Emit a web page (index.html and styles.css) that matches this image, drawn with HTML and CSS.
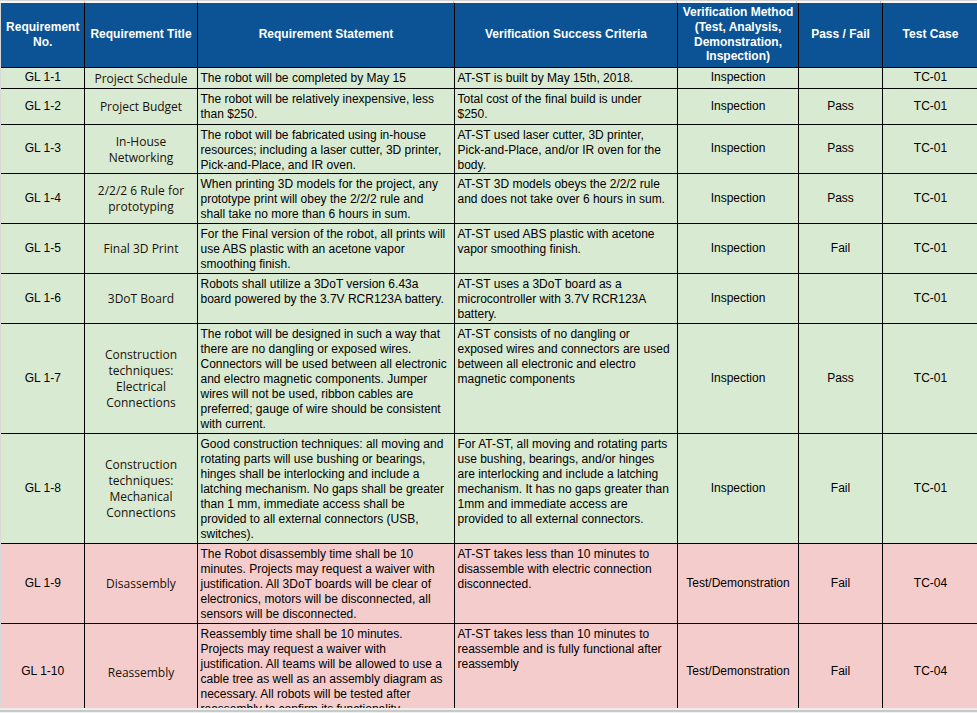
FILE: index.html
```html
<!DOCTYPE html>
<html>
<head>
<meta charset="utf-8">
<link rel="stylesheet" href="styles.css">
</head>
<body>
<div class="viewport">
  <div class="topgrid">
    <span class="g1"></span><span class="g2"></span><span class="g3"></span><span class="g4"></span><span class="g5"></span><span class="g6"></span><span class="g7"></span>
  </div>
  <div class="clip">
    <table class="sheet">
      <colgroup>
        <col class="c1"><col class="c2"><col class="c3"><col class="c4"><col class="c5"><col class="c6"><col class="c7">
      </colgroup>
      <thead>
        <tr class="h-head">
          <th>Requirement<br>No.</th>
          <th>Requirement Title</th>
          <th>Requirement Statement</th>
          <th>Verification Success Criteria</th>
          <th>Verification Method<br>(Test, Analysis,<br>Demonstration,<br>Inspection)</th>
          <th>Pass / Fail</th>
          <th>Test Case</th>
        </tr>
      </thead>
      <tbody>
        <tr class="ok h21">
          <td class="mid">GL 1-1</td>
          <td class="title">Project Schedule</td>
          <td class="txt">The robot will be completed by May 15</td>
          <td class="txt">AT-ST is built by May 15th, 2018.</td>
          <td class="mid">Inspection</td>
          <td class="mid"></td>
          <td class="mid">TC-01</td>
        </tr>
        <tr class="ok h36">
          <td class="mid">GL 1-2</td>
          <td class="title">Project Budget</td>
          <td class="txt">The robot will be relatively inexpensive, less<br>than $250.</td>
          <td class="txt">Total cost of the final build is under<br>$250.</td>
          <td class="mid">Inspection</td>
          <td class="mid">Pass</td>
          <td class="mid">TC-01</td>
        </tr>
        <tr class="ok h49">
          <td class="mid">GL 1-3</td>
          <td class="title">In-House<br>Networking</td>
          <td class="txt">The robot will be fabricated using in-house<br>resources; including a laser cutter, 3D printer,<br>Pick-and-Place, and IR oven.</td>
          <td class="txt">AT-ST used laser cutter, 3D printer,<br>Pick-and-Place, and/or IR oven for the<br>body.</td>
          <td class="mid">Inspection</td>
          <td class="mid">Pass</td>
          <td class="mid">TC-01</td>
        </tr>
        <tr class="ok h50">
          <td class="mid">GL 1-4</td>
          <td class="title">2/2/2 6 Rule for<br>prototyping</td>
          <td class="txt">When printing 3D models for the project, any<br>prototype print will obey the 2/2/2 rule and<br>shall take no more than 6 hours in sum.</td>
          <td class="txt">AT-ST 3D models obeys the 2/2/2 rule<br>and does not take over 6 hours in sum.</td>
          <td class="mid">Inspection</td>
          <td class="mid">Pass</td>
          <td class="mid">TC-01</td>
        </tr>
        <tr class="ok h50">
          <td class="mid">GL 1-5</td>
          <td class="title">Final 3D Print</td>
          <td class="txt">For the Final version of the robot, all prints will<br>use ABS plastic with an acetone vapor<br>smoothing finish.</td>
          <td class="txt">AT-ST used ABS plastic with acetone<br>vapor smoothing finish.</td>
          <td class="mid">Inspection</td>
          <td class="mid">Fail</td>
          <td class="mid">TC-01</td>
        </tr>
        <tr class="ok h50">
          <td class="mid">GL 1-6</td>
          <td class="title">3DoT Board</td>
          <td class="txt">Robots shall utilize a 3DoT version 6.43a<br>board powered by the 3.7V RCR123A battery.</td>
          <td class="txt">AT-ST uses a 3DoT board as a<br>microcontroller with 3.7V RCR123A<br>battery.</td>
          <td class="mid">Inspection</td>
          <td class="mid"></td>
          <td class="mid">TC-01</td>
        </tr>
        <tr class="ok h110">
          <td class="mid">GL 1-7</td>
          <td class="title">Construction<br>techniques:<br>Electrical<br>Connections</td>
          <td class="txt">The robot will be designed in such a way that<br>there are no dangling or exposed wires.<br>Connectors will be used between all electronic<br>and electro magnetic components. Jumper<br>wires will not be used, ribbon cables are<br>preferred; gauge of wire should be consistent<br>with current.</td>
          <td class="txt">AT-ST consists of no dangling or<br>exposed wires and connectors are used<br>between all electronic and electro<br>magnetic components</td>
          <td class="mid">Inspection</td>
          <td class="mid">Pass</td>
          <td class="mid">TC-01</td>
        </tr>
        <tr class="ok h110">
          <td class="mid">GL 1-8</td>
          <td class="title">Construction<br>techniques:<br>Mechanical<br>Connections</td>
          <td class="txt">Good construction techniques: all moving and<br>rotating parts will use bushing or bearings,<br>hinges shall be interlocking and include a<br>latching mechanism. No gaps shall be greater<br>than 1 mm, immediate access shall be<br>provided to all external connectors (USB,<br>switches).</td>
          <td class="txt">For AT-ST, all moving and rotating parts<br>use bushing, bearings, and/or hinges<br>are interlocking and include a latching<br>mechanism. It has no gaps greater than<br>1mm and immediate access are<br>provided to all external connectors.</td>
          <td class="mid">Inspection</td>
          <td class="mid">Fail</td>
          <td class="mid">TC-01</td>
        </tr>
        <tr class="bad h80">
          <td class="mid">GL 1-9</td>
          <td class="title">Disassembly</td>
          <td class="txt">The Robot disassembly time shall be 10<br>minutes. Projects may request a waiver with<br>justification. All 3DoT boards will be clear of<br>electronics, motors will be disconnected, all<br>sensors will be disconnected.</td>
          <td class="txt">AT-ST takes less than 10 minutes to<br>disassemble with electric connection<br>disconnected.</td>
          <td class="mid">Test/Demonstration</td>
          <td class="mid">Fail</td>
          <td class="mid">TC-04</td>
        </tr>
        <tr class="bad h97">
          <td class="mid">GL 1-10</td>
          <td class="title">Reassembly</td>
          <td class="txt">Reassembly time shall be 10 minutes.<br>Projects may request a waiver with<br>justification. All teams will be allowed to use a<br>cable tree as well as an assembly diagram as<br>necessary. All robots will be tested after<br>reassembly to confirm its functionality.</td>
          <td class="txt">AT-ST takes less than 10 minutes to<br>reassemble and is fully functional after<br>reassembly</td>
          <td class="mid">Test/Demonstration</td>
          <td class="mid">Fail</td>
          <td class="mid">TC-04</td>
        </tr>
      </tbody>
    </table>
  </div>
  <div class="hscroll"></div>
</div>
</body>
</html>
```

FILE: styles.css
```css
html, body {
  margin: 0;
  padding: 0;
  background: #ffffff;
}

.viewport {
  width: 977px;
  height: 713px;
  overflow: hidden;
  display: flex;
  flex-direction: column;
}

.topgrid {
  display: flex;
  height: 3px;
  flex: 0 0 3px;
  border-top: 1px solid #d4d4d4;
  box-sizing: border-box;
  background: #f7f7f7;
}

.topgrid span {
  border-right: 1px solid #c4c4c4;
  box-sizing: border-box;
}
.topgrid .g1 { width: 85px; }
.topgrid .g2 { width: 113px; }
.topgrid .g3 { width: 257px; }
.topgrid .g4 { width: 223px; }
.topgrid .g5 { width: 121px; }
.topgrid .g6 { width: 84px; }
.topgrid .g7 { width: 96px; border-right: none; }

.clip {
  flex: 0 0 705px;
  height: 705px;
  overflow: hidden;
  border-left: 1px solid #d8d8d8;
}

.sheet {
  width: 977px;
  table-layout: fixed;
  border-collapse: collapse;
  font-family: "Liberation Sans", Arial, sans-serif;
  font-size: 12px;
  line-height: 15px;
  color: #000;
}

.c1 { width: 83px; }
.c2 { width: 113px; }
.c3 { width: 257px; }
.c4 { width: 223px; }
.c5 { width: 121px; }
.c6 { width: 84px; }
.c7 { width: 96px; }

.sheet th,
.sheet td {
  border: 1px solid #000;
  padding: 0 2px 0 3px;
  overflow: hidden;
  white-space: nowrap;
}

.sheet tr > :first-child {
  border-left: none;
}

.sheet th {
  background: #0b5394;
  color: #ffffff;
  font-weight: bold;
  text-align: center;
  vertical-align: middle;
  border-top: none;
  line-height: 14.7px;
}

.h-head { height: 64px; }
.h21 { height: 21px; }
.h36 { height: 36px; }
.h49 { height: 49px; }
.h50 { height: 50px; }
.h80 { height: 80px; }
.h97 { height: 97px; }
.h110 { height: 110px; }

.ok td { background: #d9ead3; }
.bad td { background: #f4cccc; }

.sheet td.mid {
  text-align: center;
  vertical-align: middle;
}

.sheet td.title {
  text-align: center;
  vertical-align: middle;
  font-family: "Open Sans", "Noto Sans", sans-serif;
  font-size: 12px;
  line-height: 16px;
  color: #1a1208;
  padding-top: 2px;
}

.sheet td.txt {
  text-align: left;
  vertical-align: top;
  padding-top: 3px;
}

.hscroll {
  flex: 1 1 auto;
  border-top: 2px solid #ededed;
  background: linear-gradient(#c9c9c9 0 2px, #f1f1f1 2px);
}
```
